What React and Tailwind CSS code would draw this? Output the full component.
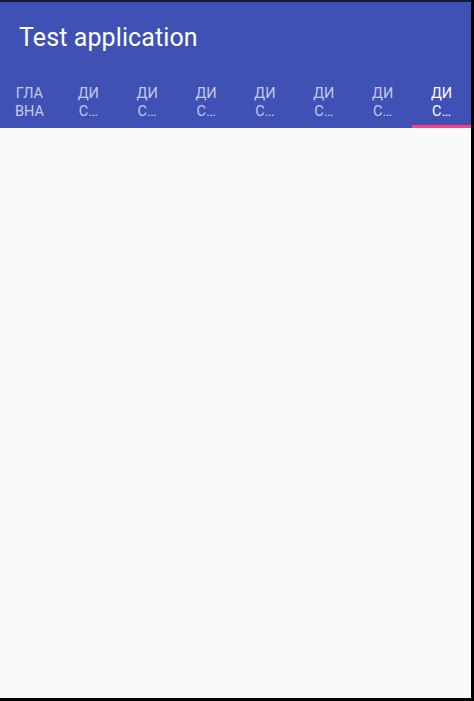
import React, { useState } from 'react';

const tabs = ['ГЛАВНА', 'ДИСЦИПЛИНА 1', 'ДИСЦИПЛИНА 2', 'ДИСЦИПЛИНА 3', 'ДИСЦИПЛИНА 4', 'ДИСЦИПЛИНА 5', 'ДИСЦИПЛИНА 6', 'ДИСЦИПЛИНА 7'];

const short = (label) => (label === 'ГЛАВНА' ? ['ГЛА', 'ВНА'] : ['ДИ', 'С…']);

const App = () => {
  const [active, setActive] = useState(7);

  return (
    <div className="h-[701px] w-[474px] bg-black flex flex-col" style={{ fontFamily: 'Roboto, "Noto Sans", sans-serif' }}>
      {/* status bar edge */}
      <div className="h-[2px] w-[471px] bg-[#151a3a] shrink-0" />
      <div className="flex flex-col w-[471px] h-[696px] bg-[#fafafa]">
        {/* App bar */}
        <header className="bg-[#3f51b5] shrink-0">
          <div className="h-[73px] flex items-center pl-[19px] pb-[2px]">
            <h1 className="text-white text-[25px] leading-none tracking-[0.1px]">Test application</h1>
          </div>
          {/* Tabs */}
          <div className="flex h-[53px]">
            {tabs.map((t, i) => {
              const [l1, l2] = short(t);
              const isActive = i === active;
              return (
                <button
                  key={t}
                  onClick={() => setActive(i)}
                  className={`relative flex-1 flex flex-col items-center justify-center pt-[2px] text-[14.5px] leading-[18px] ${isActive ? 'text-white' : 'text-white/70'}`}
                >
                  <span>{l1}</span>
                  <span>{l2}</span>
                  {isActive && <span className="absolute left-0 right-0 bottom-0 h-[3px] bg-[#ff4081]" />}
                </button>
              );
            })}
          </div>
        </header>
        <main className="flex-1" />
      </div>
    </div>
  );
};

export default App;
